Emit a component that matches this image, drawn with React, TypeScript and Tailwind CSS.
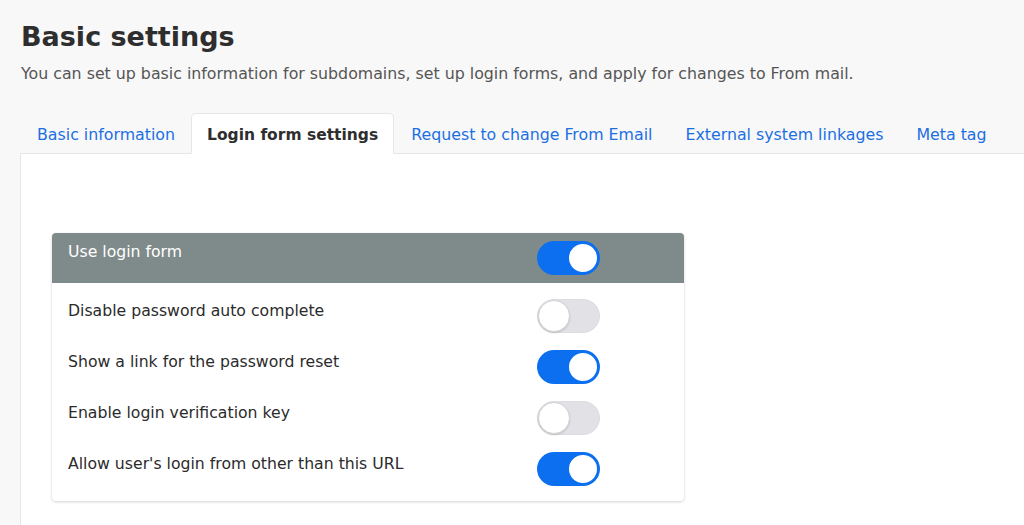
import React from "react";

function Toggle({ on }: { on: boolean }) {
  return on ? (
    <div className="relative h-[34px] w-[63px] shrink-0 rounded-full bg-[#0b6ff0]">
      <div className="absolute right-[1px] top-[1px] h-[32px] w-[32px] rounded-full border-2 border-[#0b6ff0] bg-white" />
    </div>
  ) : (
    <div className="relative h-[34px] w-[63px] shrink-0 rounded-full border border-[#dcdce0] bg-[#e2e2e6]">
      <div className="absolute left-0 top-0 h-[32px] w-[32px] rounded-full border border-[#d4d4d8] bg-white shadow-[0_1px_2px_rgba(0,0,0,0.15)]" />
    </div>
  );
}

const rows: { label: string; on: boolean }[] = [
  { label: "Disable password auto complete", on: false },
  { label: "Show a link for the password reset", on: true },
  { label: "Enable login verification key", on: false },
  { label: "Allow user's login from other than this URL", on: true },
];

const tabs = [
  "Basic information",
  "Login form settings",
  "Request to change From Email",
  "External system linkages",
  "Meta tag",
];

export default function App() {
  return (
    <div
      className="min-h-[525px] h-[525px] overflow-hidden bg-[#f8f8f8] pl-[20px] pt-[20px]"
      style={{ fontFamily: '"DejaVu Sans", Verdana, sans-serif' }}
    >
      <h1 className="pl-[1px] text-[27px] font-bold leading-[34px] text-[#2e2e2e]">Basic settings</h1>
      <p className="mt-[9px] pl-[1px] text-[15.8px] leading-[22px] text-[#555]">
        You can set up basic information for subdomains, set up login forms, and apply for changes to From mail.
      </p>
      <div className="mt-[28px] flex gap-[1px] border-b border-[#e6e6e6] pl-[1px]">
        {tabs.map((t, i) =>
          i === 1 ? (
            <div
              key={t}
              className="-mb-px flex h-[41px] items-center rounded-t-[5px] border border-b-white border-[#e6e6e6] bg-white px-[15px] pt-[4px] text-[15.5px] font-bold text-[#2e2e2e]"
            >
              {t}
            </div>
          ) : (
            <div
              key={t}
              className={`flex h-[40px] items-center pt-[4px] text-[15.8px] text-[#1c6fe3] ${i === 0 ? "pl-[16px] pr-[15px]" : "px-[16px]"}`}
            >
              {t}
            </div>
          )
        )}
      </div>
      <div className="h-full border-l border-[#e6e6e6] bg-white pl-[31px] pt-[79px]">
        <div className="w-[632px] overflow-hidden rounded-[4px] bg-white shadow-[0_1px_3px_rgba(0,0,0,0.18)]">
          <div className="flex h-[50px] items-start bg-[#7f8b8a] px-[16px] pt-[8px]">
            <div className="w-[469px] pt-[1px] text-[15.7px] leading-[20px] text-white">Use login form</div>
            <Toggle on={true} />
          </div>
          <div className="flex flex-col gap-[17px] px-[16px] pb-[15px] pt-[16px]">
            {rows.map((r) => (
              <div key={r.label} className="flex items-start">
                <div className="w-[469px] text-[15.7px] leading-[24px] text-[#2b2b2b]">{r.label}</div>
                <Toggle on={r.on} />
              </div>
            ))}
          </div>
        </div>
      </div>
    </div>
  );
}
